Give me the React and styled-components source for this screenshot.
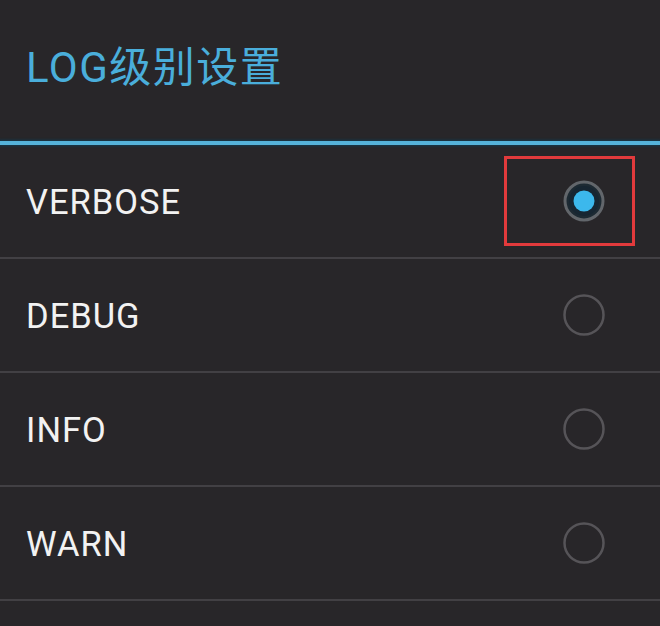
import React, { useState } from "react";
import styled, { createGlobalStyle } from "styled-components";

const GlobalStyle = createGlobalStyle`
  html, body {
    margin: 0;
    padding: 0;
    background: #282629;
  }
  body {
    font-family: "Roboto", "Noto Sans CJK SC", sans-serif;
  }
`;

const levels = ["VERBOSE", "DEBUG", "INFO", "WARN"];

const Radio = ({ checked }) => (
  <svg width="48" height="48" viewBox="0 0 48 48">
    {checked ? (
      <>
        <circle cx="24" cy="24" r="19" fill="#1d2a33" stroke="#62666b" strokeWidth="3" />
        <circle cx="24" cy="24" r="15" fill="#172632" />
        <circle cx="24" cy="24" r="10.5" fill="#3cb8ec" />
      </>
    ) : (
      <circle cx="24" cy="24" r="19.5" fill="none" stroke="#565458" strokeWidth="2.5" />
    )}
  </svg>
);

const App = () => {
  const [level, setLevel] = useState("VERBOSE");

  return (
    <>
      <GlobalStyle />
      <Dialog>
        <Header>
          <Title>LOG级别设置</Title>
        </Header>
        <AccentLine />
        <List>
          {levels.map((item) => (
            <Row key={item} onClick={() => setLevel(item)}>
              <Label>{item}</Label>
              <RadioBox $highlighted={item === "VERBOSE"}>
                <Radio checked={level === item} />
              </RadioBox>
            </Row>
          ))}
        </List>
      </Dialog>
    </>
  );
};

const Dialog = styled.div`
  width: 660px;
  height: 626px;
  overflow: hidden;
  background: #282629;
`;

const Header = styled.div`
  display: flex;
  align-items: center;
  height: 141px;
  padding: 0 0 14px 26px;
  box-sizing: border-box;
`;

const Title = styled.h1`
  margin: 0;
  font-family: "Roboto", "Noto Sans CJK SC", sans-serif;
  font-size: 42px;
  font-weight: 400;
  color: #4aaedb;
  letter-spacing: 1.5px;
`;

const AccentLine = styled.div`
  height: 4px;
  background: #55b3da;
  box-shadow: 0 0 3px 1px #133a4c;
`;

const List = styled.div`
  display: flex;
  flex-direction: column;
`;

const Row = styled.div`
  display: flex;
  align-items: center;
  justify-content: space-between;
  height: 112px;
  padding: 0 25px 0 26px;
  border-bottom: 2px solid #424044;
  cursor: pointer;
`;

const Label = styled.span`
  font-family: "Roboto", sans-serif;
  font-size: 34.5px;
  letter-spacing: 1px;
  color: #f2f2f2;
  padding-top: 2px;
`;

const RadioBox = styled.div`
  display: flex;
  align-items: center;
  justify-content: flex-end;
  width: 131px;
  height: 90px;
  padding-right: 24px;
  box-sizing: border-box;
  border: 3px solid ${(p) => (p.$highlighted ? "#e23a3c" : "transparent")};
`;

export default App;
